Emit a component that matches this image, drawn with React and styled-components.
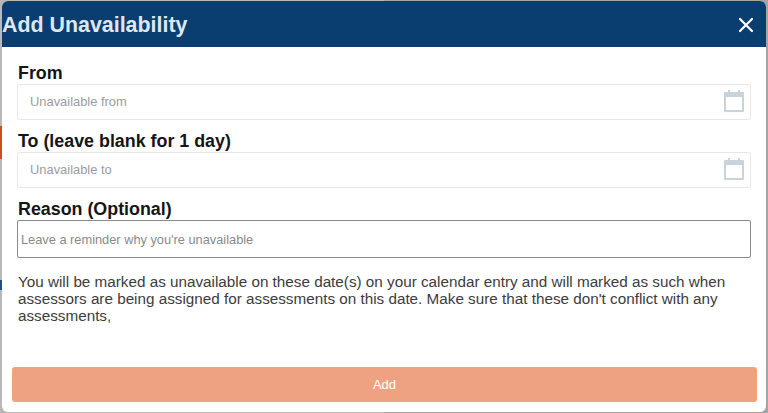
import React from "react";
import styled, { createGlobalStyle } from "styled-components";

const Global = createGlobalStyle`
  html, body { margin: 0; padding: 0; height: 100%; overflow: hidden; }
  #root { height: 100%; }
  * { box-sizing: border-box; }
`;

const Backdrop = styled.div`
  position: relative;
  width: 768px;
  height: 413px;
  padding: 1px 2px 1px 2px;
  background: linear-gradient(90deg, #b8b8b8 50%, #a4a4a4 50%);
  font-family: "Liberation Sans", Arial, sans-serif;
`;

const PageMark = styled.div`
  position: absolute;
  left: 0;
  top: ${(p) => p.$top}px;
  width: 2px;
  height: ${(p) => p.$height}px;
  background: ${(p) => p.$color};
`;

const Dialog = styled.div`
  width: 764px;
  height: 411px;
  background: #fff;
  border-radius: 6px;
  overflow: hidden;
  display: flex;
  flex-direction: column;
`;

const Header = styled.header`
  height: 46px;
  flex: none;
  background: #0a3e70;
  display: flex;
  align-items: center;
  justify-content: space-between;
  padding: 1px 12px 0 0;
`;

const Title = styled.h1`
  margin: 0;
  color: #dfe8f1;
  font-size: 21.4px;
  font-weight: 700;
  line-height: 24px;
`;

const CloseButton = styled.button`
  border: 0;
  padding: 0;
  background: none;
  display: flex;
  width: 16px;
  height: 16px;
`;

const Body = styled.div`
  flex: 1;
  display: flex;
  flex-direction: column;
  padding: 16px 15px 0;
`;

const Label = styled.label`
  display: block;
  color: #151515;
  font-size: 17.85px;
  font-weight: 700;
  line-height: 20px;
  margin: 0 0 1px 1px;
`;

const Field = styled.div`
  margin-bottom: ${(p) => p.$gap}px;
`;

const DateBox = styled.div`
  height: 36px;
  border: 1px solid #e6e6e6;
  border-radius: 2px;
  display: flex;
  align-items: center;
  justify-content: space-between;
  padding: 0 6px 2px 12px;
  color: #9c9c9c;
  font-size: 12.9px;
`;

const ReasonInput = styled.input`
  display: block;
  width: 100%;
  height: 38px;
  border: 1px solid #8a8a8a;
  border-radius: 2px;
  padding: 0 3px;
  margin: 0;
  outline: none;
  font-family: inherit;
  font-size: 12.8px;
  &::placeholder { color: #8a8a8a; opacity: 1; }
`;

const Note = styled.p`
  margin: 15px 0 0 1px;
  color: #3c3c3c;
  font-size: 15.25px;
  line-height: 17px;
  width: 725px;
`;

const Footer = styled.div`
  margin-top: auto;
  padding: 0 9px 10px 10px;
`;

const AddButton = styled.button`
  display: block;
  width: 100%;
  height: 35px;
  border: 0;
  border-radius: 3px;
  background: #efa282;
  color: #fff;
  font-family: inherit;
  font-size: 13px;
`;

const BodyInner = styled.div`
  flex: 1;
  display: flex;
  flex-direction: column;
`;

const CalendarIcon = () => (
  <svg width="20" height="22" viewBox="0 0 20 22" fill="none">
    <rect x="4" y="0" width="2" height="3" fill="#c8d3dc" />
    <rect x="14" y="0" width="2" height="3" fill="#c8d3dc" />
    <path d="M1 2h18a1 1 0 0 1 1 1v18a1 1 0 0 1-1 1H1a1 1 0 0 1-1-1V3a1 1 0 0 1 1-1z" fill="#c8d3dc" />
    <rect x="2" y="7" width="16" height="13" fill="#fff" />
  </svg>
);

const CloseIcon = () => (
  <svg width="16" height="16" viewBox="0 0 16 16">
    <path d="M2 2l12 12M14 2L2 14" stroke="#fff" strokeWidth="2.2" strokeLinecap="round" />
  </svg>
);

export default function App() {
  return (
    <>
      <Global />
      <Backdrop>
        <PageMark $top={126} $height={33} $color="#c8501c" />
        <PageMark $top={280} $height={10} $color="#1f4f86" />
        <Dialog>
          <Header>
            <Title>Add Unavailability</Title>
            <CloseButton aria-label="Close"><CloseIcon /></CloseButton>
          </Header>
          <BodyInner>
            <Body>
              <Field $gap={11}>
                <Label>From</Label>
                <DateBox>Unavailable from<CalendarIcon /></DateBox>
              </Field>
              <Field $gap={11}>
                <Label>To (leave blank for 1 day)</Label>
                <DateBox>Unavailable to<CalendarIcon /></DateBox>
              </Field>
              <Field $gap={0}>
                <Label>Reason (Optional)</Label>
                <ReasonInput placeholder="Leave a reminder why you're unavailable" />
              </Field>
              <Note>
                You will be marked as unavailable on these date(s) on your calendar entry and will marked as such when assessors are being assigned for assessments on this date. Make sure that these don't conflict with any assessments,
              </Note>
            </Body>
            <Footer>
              <AddButton>Add</AddButton>
            </Footer>
          </BodyInner>
        </Dialog>
      </Backdrop>
    </>
  );
}
